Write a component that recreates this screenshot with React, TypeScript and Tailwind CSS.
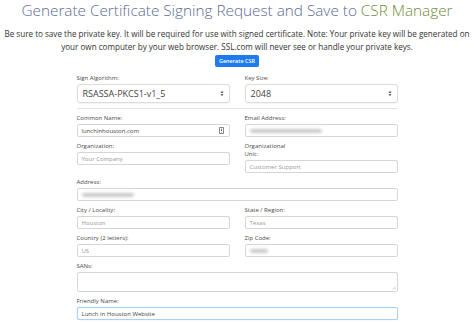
import React from "react";

const font = { fontFamily: '"Open Sans", "Liberation Sans", sans-serif' };

function Label({ children }: { children: React.ReactNode }) {
  return (
    <div className="text-[6px] leading-[8px] text-[#4a4a4a] mb-[2px]">{children}</div>
  );
}

function Field({
  label,
  value,
  placeholder,
  children,
  className = "",
}: {
  label: React.ReactNode;
  value?: string;
  placeholder?: boolean;
  children?: React.ReactNode;
  className?: string;
}) {
  return (
    <div className={className}>
      <Label>{label}</Label>
      <div className="h-[13px] border border-[#d6d6d6] rounded-[2px] bg-white flex items-center px-[4px]">
        {value !== undefined && (
          <span className={`text-[6px] leading-[8px] ${placeholder ? "text-[#999]" : "text-[#444]"}`}>{value}</span>
        )}
        {children}
      </div>
    </div>
  );
}

function Blur({ w }: { w: string }) {
  return <span className={`block h-[4px] ${w} bg-[#c9c9c9] rounded-full blur-[1.5px]`} />;
}

function Arrows() {
  return (
    <svg width="4" height="7" viewBox="0 0 4 7" className="ml-auto">
      <path d="M0.5 2.8 L2 1 L3.5 2.8 Z" fill="#333" />
      <path d="M0.5 4.2 L2 6 L3.5 4.2 Z" fill="#333" />
    </svg>
  );
}

function Select({ label, value }: { label: string; value: string }) {
  return (
    <div>
      <Label>{label}</Label>
      <div className="h-[19px] border border-[#dcdcdc] rounded-[3px] bg-white flex items-center pl-[5px] pr-[5px] shadow-[0_1px_1px_rgba(0,0,0,0.05)]">
        <span className="text-[9px] leading-[12px] text-[#444]">{value}</span>
        <Arrows />
      </div>
    </div>
  );
}

export default function App() {
  return (
    <div className="w-[474px] h-[323px] bg-white overflow-hidden" style={font}>
      <h1 className="text-center text-[15.3px] leading-[20px] font-light text-[#5b6b96] whitespace-nowrap">
        Generate Certificate Signing Request and Save to <span className="text-[#6f8c3a]">CSR Manager</span>
      </h1>
      <p className="mt-[7px] text-center text-[8.1px] leading-[13px] text-[#333]">
        <span className="block whitespace-nowrap">
          Be sure to save the private key. It will be required for use with signed certificate. Note: Your private key will be generated on
        </span>
        <span className="block whitespace-nowrap">
          your own computer by your web browser. SSL.com will never see or handle your private keys.
        </span>
      </p>
      <div className="mt-[2px] flex justify-center">
        <button className="h-[12px] w-[44px] rounded-[2px] bg-[#1f7cf0] text-white text-[5.5px] font-semibold leading-[12px]">
          Generate CSR
        </button>
      </div>

      <div className="w-[321px] mx-auto mt-[7px]">
        <div className="grid grid-cols-2 gap-x-[15px]">
          <Select label="Sign Algorithm:" value="RSASSA-PKCS1-v1_5" />
          <Select label="Key Size:" value="2048" />
        </div>
        <div className="mt-[5px] h-px bg-[#e2e2e2]" />

        <div className="mt-[5px] grid grid-cols-2 gap-x-[15px] gap-y-[5px] items-start">
          <Field label="Common Name:" value="lunchinhouston.com">
            <svg width="5" height="7" viewBox="0 0 5 7" className="ml-auto mr-[1px]">
              <rect x="0.4" y="0.4" width="4.2" height="6.2" rx="0.6" fill="none" stroke="#444" strokeWidth="0.7" />
              <path d="M2.5 1.8 V4.2" stroke="#444" strokeWidth="0.8" />
              <path d="M2.5 5 V5.4" stroke="#444" strokeWidth="0.8" />
            </svg>
          </Field>
          <Field label="Email Address:">
            <Blur w="w-[72px]" />
          </Field>
          <Field label="Organization:" value="Your Company" placeholder />
          <Field
            label={
              <>
                Organizational
                <br />
                Unit:
              </>
            }
            value="Customer Support"
            placeholder
          />
          <Field className="col-span-2" label="Address:">
            <Blur w="w-[52px]" />
          </Field>
          <Field label="City / Locality:" value="Houston" placeholder />
          <Field label="State / Region:" value="Texas" placeholder />
          <Field label="Country (2 letters):" value="US" placeholder />
          <Field label="Zip Code:">
            <Blur w="w-[18px]" />
          </Field>
          <div className="col-span-2">
            <Label>SANs:</Label>
            <div className="h-[20px] border border-[#d6d6d6] rounded-[2px] bg-white flex items-end justify-end p-[1px]">
              <svg width="4" height="4" viewBox="0 0 4 4">
                <path d="M0.5 3.5 L3.5 0.5 M2 3.5 L3.5 2" stroke="#aaa" strokeWidth="0.5" />
              </svg>
            </div>
          </div>
          <div className="col-span-2">
            <Label>Friendly Name:</Label>
            <div className="h-[13px] border border-[#a9d1f5] rounded-[2px] bg-white flex items-center px-[4px] shadow-[0_0_1px_rgba(80,160,240,0.5)]">
              <span className="text-[6px] leading-[8px] text-[#444]">Lunch in Houston Website</span>
            </div>
          </div>
        </div>
      </div>
    </div>
  );
}
